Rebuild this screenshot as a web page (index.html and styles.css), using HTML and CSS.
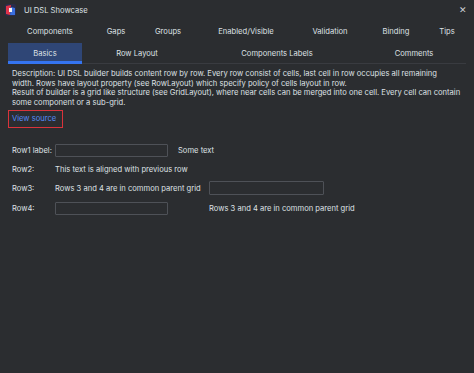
FILE: index.html
```html
<!DOCTYPE html>
<html lang="en">
<head>
    <meta charset="UTF-8">
    <title>UI DSL Showcase</title>
    <link rel="stylesheet" href="styles.css">
</head>
<body>
    <div class="titlebar">
        <svg class="app-icon" width="11" height="12" viewBox="0 0 11 12">
            <rect x="0" y="0" width="11" height="12" rx="2" fill="#2a2c4a"/>
            <path d="M1 2 L6 1 L5 11 L1 10 Z" fill="#e0344a"/>
            <path d="M6 3 L10 4 L10 11 L5 11 Z" fill="#3a6fe0"/>
            <rect x="4" y="4" width="3" height="4" fill="#f2f2f2"/>
        </svg>
        <span class="title">UI DSL Showcase</span>
        <span class="close">&#x2715;</span>
    </div>

    <div class="tabs tabs-top">
        <div class="tab" style="width:84px">Components</div>
        <div class="tab" style="width:48px">Gaps</div>
        <div class="tab" style="width:56px">Groups</div>
        <div class="tab" style="width:100px">Enabled/Visible</div>
        <div class="tab" style="width:68px">Validation</div>
        <div class="tab" style="width:64px">Binding</div>
        <div class="tab" style="width:38px">Tips</div>
    </div>
    <div class="tabs tabs-bottom">
        <div class="tab selected" style="width:74px">Basics</div>
        <div class="tab" style="width:110px">Row Layout</div>
        <div class="tab" style="width:170px">Components Labels</div>
        <div class="tab" style="width:104px">Comments</div>
    </div>

    <div class="content">
        <p class="description">Description: UI DSL builder builds content row by row. Every row consist of cells, last cell in row occupies all remaining<br>width. Rows have layout property (see RowLayout) which specify policy of cells layout in row.<br>Result of builder is a grid like structure (see GridLayout), where near cells can be merged into one cell. Every cell can contain<br>some component or a sub-grid.</p>
        <div class="source-box"><a class="link" href="#">View source</a></div>

        <div class="form">
            <div class="row row1">
                <span class="label">Row1 label:</span>
                <span class="input"></span>
                <span class="text">Some text</span>
            </div>
            <div class="row row2">
                <span class="label">Row2:</span>
                <span class="text">This text is aligned with previous row</span>
            </div>
            <div class="row row3">
                <span class="label">Row3:</span>
                <span class="text wide">Rows 3 and 4 are in common parent grid</span>
                <span class="input"></span>
            </div>
            <div class="row row4">
                <span class="label">Row4:</span>
                <span class="input"></span>
                <span class="text">Rows 3 and 4 are in common parent grid</span>
            </div>
        </div>
    </div>
</body>
</html>
```
FILE: styles.css
```css
body {
    margin: 0;
    width: 474px;
    height: 373px;
    background-color: #2b2d30;
    color: #dfe1e5;
    font-family: Inter, "Noto Sans", sans-serif;
    font-size: 7.6px;
    overflow: hidden;
}
.titlebar {
    height: 20px;
    display: flex;
    align-items: center;
    padding-left: 5px;
    position: relative;
}
.app-icon {
    margin-right: 8px;
}
.title {
    color: #dfe1e5;
}
.close {
    position: absolute;
    right: 7px;
    top: 4px;
    font-size: 9px;
    color: #ced0d6;
}
.tabs {
    display: flex;
    margin: 0 8px;
}
.tabs-top {
    height: 23px;
}
.tabs-bottom {
    height: 20px;
    border-bottom: 1px solid #393b40;
}
.tab {
    display: flex;
    align-items: center;
    justify-content: center;
    white-space: nowrap;
    color: #dfe1e5;
}
.tab.selected {
    background-color: #2f4676;
    border-bottom: 3px solid #3574f0;
    box-sizing: border-box;
    margin-bottom: -1px;
    height: 21px;
    padding-top: 3px;
}
.content {
    padding: 5px 12px 0;
}
.description {
    margin: 0;
    white-space: nowrap;
    line-height: 9.5px;
}
.source-box {
    display: inline-block;
    margin: 3px 0 0 -4px;
    padding: 3px 6px 3px 3px;
    border: 1.5px solid #d9333b;
    line-height: 10px;
}
.link {
    color: #548af7;
    text-decoration: none;
}
.form {
    margin-top: 16px;
}
.row {
    display: flex;
    align-items: center;
    height: 13px;
}
.row2 {
    margin-top: 6px;
}
.row3 {
    margin-top: 5px;
    height: 14px;
}
.row4 {
    margin-top: 7px;
}
.label {
    width: 43px;
    flex: none;
}
.input {
    width: 113px;
    height: 13px;
    box-sizing: border-box;
    border: 1px solid #4e5157;
    border-radius: 1px;
    flex: none;
}
.row1 .text {
    margin-left: 10px;
}
.row3 .wide {
    width: 154px;
}
.row3 .input {
    width: 115px;
    height: 14px;
}
.row4 .text {
    margin-left: 41px;
}
```
